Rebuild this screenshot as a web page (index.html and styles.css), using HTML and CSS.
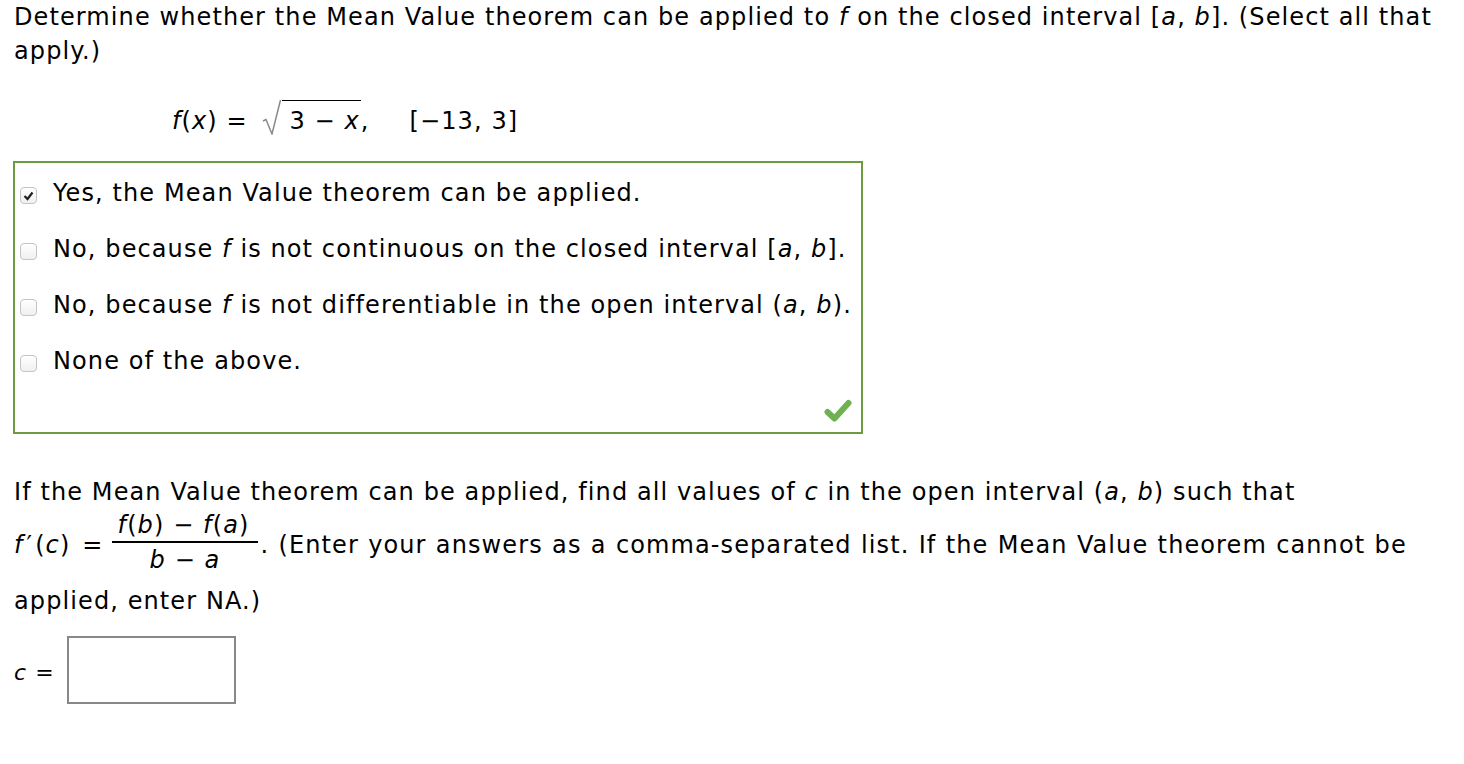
FILE: index.html
```html
<!DOCTYPE html>
<html>
<head>
<meta charset="utf-8">
<link rel="stylesheet" href="styles.css">
</head>
<body>
<div class="page">
  <p class="q">Determine whether the Mean Value theorem can be applied to <i>f</i> on the closed interval [<i>a</i>, <i>b</i>]. (Select all that apply.)</p>
  <p class="formula"><i>f</i>(<i>x</i>) = <svg class="rad" width="20" height="36" viewBox="0 0 20 36"><path d="M1 22 L4 20.5 L10 35 L18.5 1" fill="none" stroke="#8a8a8a" stroke-width="1.5"/></svg><span class="radicand">3 − <i>x</i></span>,<span class="interval">[−13, 3]</span></p>
  <div class="choices">
    <div class="choice"><span class="cb checked"><svg width="15" height="15" viewBox="0 0 15 15"><path d="M3.5 8 L6.5 11 L11.5 4.5" fill="none" stroke="#222" stroke-width="2.2"/></svg></span>Yes, the Mean Value theorem can be applied.</div>
    <div class="choice"><span class="cb"></span>No, because <i>f</i> is not continuous on the closed interval [<i>a</i>, <i>b</i>].</div>
    <div class="choice"><span class="cb"></span>No, because <i>f</i> is not differentiable in the open interval (<i>a</i>, <i>b</i>).</div>
    <div class="choice"><span class="cb"></span>None of the above.</div>
    <div class="mark"><svg width="28" height="24" viewBox="0 0 28 24"><path d="M3.5 13 L10.5 19.5 L24.5 4" fill="none" stroke="#6db153" stroke-width="6" stroke-linecap="round" stroke-linejoin="round"/></svg></div>
  </div>
  <p class="l1">If the Mean Value theorem can be applied, find all values of <i>c</i> in the open interval (<i>a</i>, <i>b</i>) such that</p>
  <p class="l2"><i>f</i><span class="prime">′</span>(<i>c</i>)<span class="eq">=</span><span class="frac"><span class="num"><i>f</i>(<i>b</i>) − <i>f</i>(<i>a</i>)</span><span class="den"><i>b</i> − <i>a</i></span></span><span class="tail">. (Enter your answers as a comma-separated list. If the Mean Value theorem cannot be</span></p>
  <p class="l3">applied, enter NA.)</p>
  <div class="answer"><span class="lbl"><i>c</i> =</span><span class="input"></span></div>
</div>
</body>
</html>
```
FILE: styles.css
```css
html, body { margin: 0; padding: 0; background: #fff; }
body { font-family: "DejaVu Sans", Verdana, sans-serif; color: #000; font-size: 24px; letter-spacing: 1.1px; }
.page { padding: 0 0 0 14px; }
p { margin: 0; }
.q { line-height: 34px; width: 1445px; }
.formula { margin-top: 31px; padding-left: 158px; line-height: 35px; white-space: pre; }
.rad { vertical-align: -6px; margin-left: 6px; }
.radicand { border-top: 1.5px solid #000; padding: 6px 1px 0 7px; }
.interval { margin-left: 40px; }
.choices { margin-top: 22px; margin-left: -1px; width: 846px; height: 267px; border: 2px solid #6b9c3f; position: relative; padding-top: 2px; }
.choice { line-height: 56px; height: 56px; white-space: nowrap; }
.cb { display: inline-block; box-sizing: border-box; width: 17px; height: 17px; border: 1px solid #c4c4c4; border-radius: 4px; background: linear-gradient(#ffffff, #f0f0f0); vertical-align: -3px; margin: 0 16px 0 5px; position: relative; }
.cb svg { position: absolute; left: 0; top: 0; }
.mark { position: absolute; right: 9px; bottom: 9px; line-height: 0; }
.l1 { margin-top: 41px; line-height: 35px; }
.l2 { margin-top: 2px; line-height: 35px; white-space: pre; }
.prime { margin-left: 3px; margin-right: 2px; }
.eq { margin: 0 8px 0 12px; }
.frac { display: inline-flex; flex-direction: column; align-items: center; vertical-align: 20px; margin: 0 2px 0 0; }
.num { line-height: 26px; padding: 0 9px 3px 6px; border-bottom: 2px solid #000; }
.den { line-height: 26px; padding-top: 4px; }
.tail { word-spacing: 0.6px; }
.l3 { margin-top: 11px; line-height: 35px; }
.answer { display: flex; align-items: center; margin-top: 17px; }
.lbl { margin-right: 12px; font-size: 22px; margin-top: 4px; }
.input { width: 165px; height: 64px; border: 2px solid #888; }
```
